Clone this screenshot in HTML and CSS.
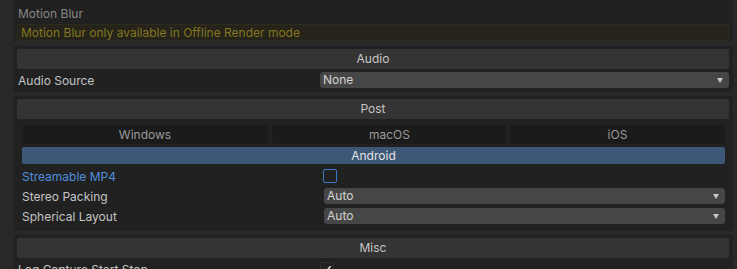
FILE: index.html
```html
<!DOCTYPE html>
<html>
<head>
<meta charset="utf-8">
<link rel="stylesheet" href="styles.css">
</head>
<body>
<div class="page">
  <section class="panel panel-blur">
    <div class="title">Motion Blur</div>
    <div class="warning">Motion Blur only available in Offline Render mode</div>
  </section>

  <section class="panel panel-audio">
    <div class="header">Audio</div>
    <div class="row">
      <div class="label">Audio Source</div>
      <div class="dropdown"><span>None</span><i class="arrow"></i></div>
    </div>
  </section>

  <section class="panel panel-post">
    <div class="header">Post</div>
    <div class="inner">
      <div class="tabs">
        <div class="tab tab-win">Windows</div>
        <div class="tab tab-mac">macOS</div>
        <div class="tab tab-ios">iOS</div>
      </div>
      <div class="tab-active">Android</div>
      <div class="row">
        <div class="label label-blue">Streamable MP4</div>
        <div class="checkbox checkbox-blue"></div>
      </div>
      <div class="row">
        <div class="label">Stereo Packing</div>
        <div class="dropdown"><span>Auto</span><i class="arrow"></i></div>
      </div>
      <div class="row">
        <div class="label">Spherical Layout</div>
        <div class="dropdown"><span>Auto</span><i class="arrow"></i></div>
      </div>
    </div>
  </section>

  <section class="panel panel-misc">
    <div class="header">Misc</div>
    <div class="row">
      <div class="label">Log Capture Start Stop</div>
      <div class="checkbox checkbox-on">
        <svg width="10" height="10" viewBox="0 0 10 10"><path d="M1.5 5.2 L4 7.6 L8.6 2.2" fill="none" stroke="#d8d8d8" stroke-width="1.6"/></svg>
      </div>
    </div>
  </section>
</div>
</body>
</html>
```

FILE: styles.css
```css
html, body {
  margin: 0;
  padding: 0;
  background: #282828;
  height: 269px;
  overflow: hidden;
}

.page {
  padding: 0 4px 0 14px;
  font-family: Inter, "Noto Sans", sans-serif;
  font-size: 12px;
  color: #c4c4c4;
}

.panel {
  background: #212121;
  padding: 3px 4px 0 3px;
}

.panel-blur {
  padding-top: 5px;
  margin-bottom: 5px;
}

.title {
  height: 18px;
  line-height: 18px;
  padding-left: 1px;
  color: #878787;
}

.warning {
  margin-top: 1px;
  height: 15px;
  line-height: 15px;
  padding-left: 3px;
  background: #25231a;
  border: 1px solid #2c2a1d;
  color: #84771f;
}

.header {
  height: 20px;
  line-height: 20px;
  background: #343434;
  text-align: center;
  color: #c6c6c6;
  border-radius: 1px;
}

.panel-audio {
  padding-bottom: 2px;
  margin-bottom: 4px;
}

.panel-audio .row {
  margin-top: 1px;
}

.panel-audio .label,
.panel-misc .label {
  padding-left: 1px;
  width: 302px;
}

.row {
  display: flex;
  align-items: center;
  height: 20px;
}

.label {
  width: 302px;
  flex: none;
  white-space: nowrap;
}

.label-blue {
  color: #4f8fdc;
}

.dropdown {
  flex: 1;
  height: 16px;
  line-height: 16px;
  background: #464646;
  border-radius: 3px;
  padding-left: 3px;
  color: #d4d4d4;
  display: flex;
  align-items: center;
  justify-content: space-between;
}

.arrow {
  width: 0;
  height: 0;
  border-left: 3.5px solid transparent;
  border-right: 3.5px solid transparent;
  border-top: 5px solid #c8c8c8;
  margin-right: 6px;
  margin-top: 1px;
}

.panel-post {
  padding-bottom: 5px;
  margin-bottom: 4px;
}

.inner {
  padding: 0 4px 0 5px;
}

.tabs {
  display: flex;
  margin-top: 6px;
}

.tab {
  height: 19px;
  line-height: 19px;
  background: #1b1b1b;
  border-radius: 3px;
  text-align: center;
  color: #9a9a9a;
}

.tab-win { width: 246px; margin-right: 4px; }
.tab-mac { width: 235px; margin-right: 3px; }
.tab-ios { width: 215px; }

.tab-active {
  margin-top: 3px;
  height: 17px;
  line-height: 17px;
  background: #3d5876;
  border-radius: 2px;
  text-align: center;
  color: #e4e4e4;
}

.tab-active + .row {
  margin-top: 2px;
}

.checkbox {
  width: 12px;
  height: 12px;
  border-radius: 2px;
  margin-left: -1px;
  display: flex;
  align-items: center;
  justify-content: center;
}

.checkbox-blue {
  border: 1px solid #3c7ac4;
  background: #212121;
}

.panel-misc .row {
  margin-top: 1px;
}

.checkbox-on {
  margin-left: 0;
  background: #1f1f1f;
  border: 1px solid #2f2f2f;
}
```
